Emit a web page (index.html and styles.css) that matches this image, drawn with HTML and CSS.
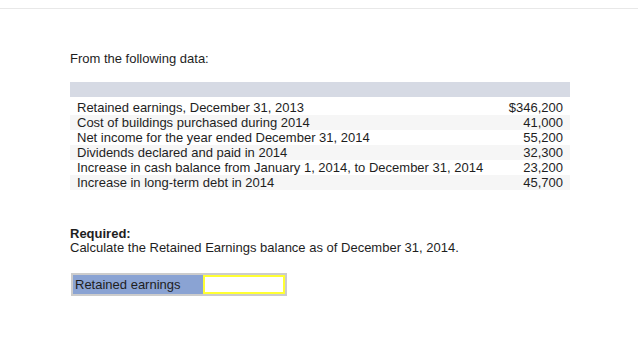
FILE: index.html
```html
<!DOCTYPE html>
<html lang="en">
<head>
    <meta charset="UTF-8">
    <title>Retained Earnings</title>
    <link rel="stylesheet" href="styles.css">
</head>
<body>
    <div class="topline"></div>
    <div class="question">
        <p class="intro">From the following data:</p>

        <table class="data">
            <thead>
                <tr><th></th><th></th></tr>
            </thead>
            <tbody>
                <tr><td>Retained earnings, December 31, 2013</td><td class="num">$346,200</td></tr>
                <tr><td>Cost of buildings purchased during 2014</td><td class="num">41,000</td></tr>
                <tr><td>Net income for the year ended December 31, 2014</td><td class="num">55,200</td></tr>
                <tr><td>Dividends declared and paid in 2014</td><td class="num">32,300</td></tr>
                <tr><td>Increase in cash balance from January 1, 2014, to December 31, 2014</td><td class="num">23,200</td></tr>
                <tr><td>Increase in long-term debt in 2014</td><td class="num">45,700</td></tr>
            </tbody>
        </table>

        <div class="required">
            <strong>Required:</strong>
            <p>Calculate the Retained Earnings balance as of December 31, 2014.</p>
        </div>

        <div class="answer">
            <label for="re">Retained earnings</label>
            <input id="re" type="text">
        </div>
    </div>
</body>
</html>
```

FILE: styles.css
```css
body {
    margin: 0;
    font-family: "Liberation Sans", Arial, sans-serif;
    font-size: 13px;
    color: #1e1e1e;
    background: #fff;
}
.topline {
    height: 8px;
    border-bottom: 1px solid #e8e8e8;
}
.question {
    padding: 42px 0 0 70px;
    width: 500px;
}
.intro {
    margin: 0 0 16px;
}
.data {
    width: 500px;
    border-collapse: collapse;
    border-bottom: 3px solid #d4d8e2;
}
.data th {
    height: 15px;
    padding: 0;
    background: #d6dae4;
}
.data td {
    padding: 0 7px;
    line-height: 15px;
}
.data tbody tr:first-child td {
    padding-top: 3px;
}
.data tbody tr:nth-child(even) td {
    background: #f6f6f6;
}
.data tbody tr:last-child {
    border-bottom: 7px solid #fff;
}
.data .num {
    text-align: right;
}
.required {
    margin-top: 30px;
    line-height: 14px;
}
.required p {
    margin: 0;
}
.answer {
    display: inline-flex;
    margin: 18px 0 0 1px;
    border: 2px solid #ccc;
}
.answer label {
    width: 128px;
    padding: 0 0 0 2px;
    line-height: 19px;
    background: #8aa3d3;
}
.answer input {
    width: 82px;
    height: 19px;
    box-sizing: border-box;
    margin: 0;
    padding: 0 3px;
    border: 2px solid #ffff33;
    background: #fff;
    outline: none;
}
```
